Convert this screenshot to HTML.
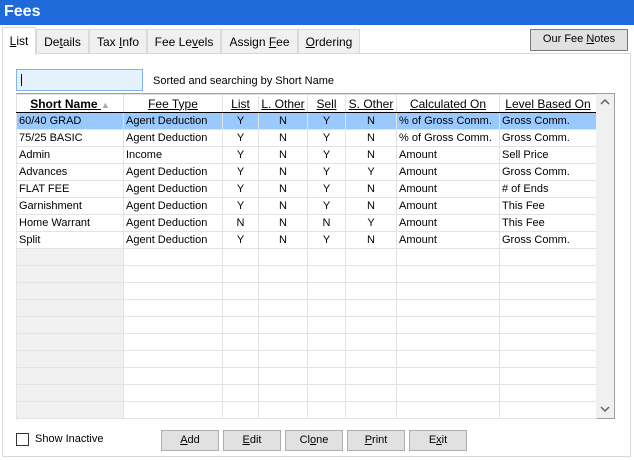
<!DOCTYPE html>
<html><head><style>
*{margin:0;padding:0;box-sizing:border-box}
body{width:634px;height:460px;background:#fff;font-family:"Liberation Sans",sans-serif;font-size:11px;color:#000;position:relative;overflow:hidden}
.abs{position:absolute}
.title{left:0;top:0;width:634px;height:25px;background:#1f6ada;color:#fff;font-weight:bold;font-size:16px;padding:3px 0 0 4px}
.tab{top:29px;height:24px;background:#f0f0f0;border:1px solid #d9d9d9;border-bottom:none;font-size:12px;padding-top:5px;text-align:center}
.panel{left:2px;top:53px;width:629px;height:404px;border:1px solid #d9d9d9;background:#fff}
.btn{background:#e1e1e1;border:1px solid #adadad;font-size:11px;text-align:center;line-height:19px;height:21px}
table{border-collapse:collapse;table-layout:fixed;position:absolute;left:16px;top:94px;width:580px}
td,th{height:17px;border:1px solid #e3e3e3;padding:0 2px;white-space:nowrap;overflow:hidden;font-weight:normal;font-size:11px}
th{height:18px;text-decoration:underline;font-size:12px;text-align:center;border-color:#e3e3e3 #e3e3e3 #000}
td.c{text-align:center}
tr.sel td{background:#99c9ff}
tr.e td:first-child{background:#f0f0f0}
</style></head><body>
<div class="abs title">Fees</div>
<div class="abs tab" style="left:36px;width:53px">De<u>t</u>ails</div>
<div class="abs tab" style="left:89px;width:58px">Tax <u>I</u>nfo</div>
<div class="abs tab" style="left:147px;width:74px">Fee Le<u>v</u>els</div>
<div class="abs tab" style="left:221px;width:77px">Assign <u>F</u>ee</div>
<div class="abs tab" style="left:298px;width:62px"><u>O</u>rdering</div>
<div class="abs panel"></div>
<div class="abs tab" style="left:2px;top:27px;height:28px;width:34px;background:#fff;border-color:#d9d9d9;padding-top:6px"><u>L</u>ist</div>
<div class="abs btn" style="left:530px;top:29px;width:98px;height:22px;background:#e1e1e1;border-color:#7a7a7a">Our Fee <u>N</u>otes</div>
<div class="abs" style="left:16px;top:69px;width:127px;height:22px;background:#e5f1fb;border:1px solid #7eb4ea"><div style="position:absolute;left:4px;top:4px;width:1px;height:12px;background:#000"></div></div>
<div class="abs" style="left:153px;top:75px">Sorted and searching by Short Name</div>
<div class="abs" style="left:16px;top:93px;width:599px;height:326px;border:1px solid #a0a0a0;background:#fff"></div>
<table>
<colgroup><col style="width:107px"><col style="width:99px"><col style="width:36px"><col style="width:49px"><col style="width:38px"><col style="width:51px"><col style="width:103px"><col style="width:97px"></colgroup>
<tr><th style="font-weight:bold">Short Name <span style="color:#aaa;text-decoration:none;display:inline-block;font-size:9px">▲</span></th><th>Fee Type</th><th>List</th><th>L. Other</th><th>Sell</th><th>S. Other</th><th>Calculated On</th><th>Level Based On</th></tr>
<tr class="sel"><td>60/40 GRAD</td><td>Agent Deduction</td><td class="c">Y</td><td class="c">N</td><td class="c">Y</td><td class="c">N</td><td>% of Gross Comm.</td><td>Gross Comm.</td></tr>
<tr><td>75/25 BASIC</td><td>Agent Deduction</td><td class="c">Y</td><td class="c">N</td><td class="c">Y</td><td class="c">N</td><td>% of Gross Comm.</td><td>Gross Comm.</td></tr>
<tr><td>Admin</td><td>Income</td><td class="c">Y</td><td class="c">N</td><td class="c">Y</td><td class="c">N</td><td>Amount</td><td>Sell Price</td></tr>
<tr><td>Advances</td><td>Agent Deduction</td><td class="c">Y</td><td class="c">N</td><td class="c">Y</td><td class="c">Y</td><td>Amount</td><td>Gross Comm.</td></tr>
<tr><td>FLAT FEE</td><td>Agent Deduction</td><td class="c">Y</td><td class="c">N</td><td class="c">Y</td><td class="c">N</td><td>Amount</td><td># of Ends</td></tr>
<tr><td>Garnishment</td><td>Agent Deduction</td><td class="c">Y</td><td class="c">N</td><td class="c">Y</td><td class="c">N</td><td>Amount</td><td>This Fee</td></tr>
<tr><td>Home Warrant</td><td>Agent Deduction</td><td class="c">N</td><td class="c">N</td><td class="c">N</td><td class="c">Y</td><td>Amount</td><td>This Fee</td></tr>
<tr><td>Split</td><td>Agent Deduction</td><td class="c">Y</td><td class="c">N</td><td class="c">Y</td><td class="c">N</td><td>Amount</td><td>Gross Comm.</td></tr>
<tr class="e"><td></td><td></td><td></td><td></td><td></td><td></td><td></td><td></td></tr>
<tr class="e"><td></td><td></td><td></td><td></td><td></td><td></td><td></td><td></td></tr>
<tr class="e"><td></td><td></td><td></td><td></td><td></td><td></td><td></td><td></td></tr>
<tr class="e"><td></td><td></td><td></td><td></td><td></td><td></td><td></td><td></td></tr>
<tr class="e"><td></td><td></td><td></td><td></td><td></td><td></td><td></td><td></td></tr>
<tr class="e"><td></td><td></td><td></td><td></td><td></td><td></td><td></td><td></td></tr>
<tr class="e"><td></td><td></td><td></td><td></td><td></td><td></td><td></td><td></td></tr>
<tr class="e"><td></td><td></td><td></td><td></td><td></td><td></td><td></td><td></td></tr>
<tr class="e"><td></td><td></td><td></td><td></td><td></td><td></td><td></td><td></td></tr>
<tr class="e"><td style="height:15px"></td><td></td><td></td><td></td><td></td><td></td><td></td><td></td></tr>
</table>
<div class="abs" style="left:596px;top:94px;width:18px;height:324px;background:#f0f0f0"></div>
<svg class="abs" style="left:600px;top:98px" width="10" height="8"><path d="M1 6 L5 2 L9 6" stroke="#606060" stroke-width="1.5" fill="none"/></svg>
<svg class="abs" style="left:600px;top:405px" width="10" height="8"><path d="M1 2 L5 6 L9 2" stroke="#606060" stroke-width="1.5" fill="none"/></svg>
<div class="abs" style="left:16px;top:433px;width:13px;height:13px;border:1px solid #333;background:#fff"></div>
<div class="abs" style="left:35px;top:433px">Show Inactive</div>
<div class="abs btn" style="left:161px;top:430px;width:58px"><u>A</u>dd</div>
<div class="abs btn" style="left:223px;top:430px;width:58px"><u>E</u>dit</div>
<div class="abs btn" style="left:285px;top:430px;width:58px">Cl<u>o</u>ne</div>
<div class="abs btn" style="left:347px;top:430px;width:58px"><u>P</u>rint</div>
<div class="abs btn" style="left:409px;top:430px;width:58px">E<u>x</u>it</div>
</body></html>
